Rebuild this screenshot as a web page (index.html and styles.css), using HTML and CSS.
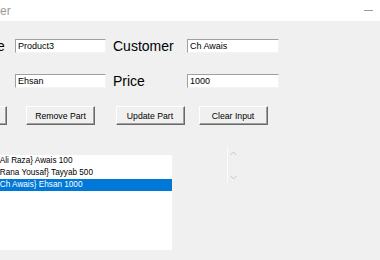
FILE: index.html
```html
<!DOCTYPE html>
<html>
<head>
<meta charset="utf-8">
<link rel="stylesheet" href="styles.css">
</head>
<body>
<div class="titlebar">
  <span class="title">Parts Manager</span>
  <span class="minimize"></span>
</div>
<main class="window">
  <div class="form">
    <label class="lbl">Part Name</label>
    <input class="entry" value="Product3">
    <label class="lbl lbl-right">Customer</label>
    <input class="entry" value="Ch Awais">

    <label class="lbl">Retailer</label>
    <input class="entry" value="Ehsan">
    <label class="lbl lbl-right">Price</label>
    <input class="entry" value="1000">

    <button class="btn btn-first">Add Part</button>
    <button class="btn">Remove Part</button>
    <button class="btn btn-mid">Update Part</button>
    <button class="btn">Clear Input</button>
  </div>
  <div class="lower">
    <ul class="listbox">
      <li>Product1 {Ali Raza} Awais 100</li>
      <li>Product2 {Rana Yousaf} Tayyab 500</li>
      <li class="selected">Product3 {Ch Awais} Ehsan 1000</li>
    </ul>
    <div class="scrollbar">
      <svg width="17" height="36" viewBox="0 0 17 36">
        <line x1="0.5" y1="0" x2="0.5" y2="36" stroke="#fbfbfb" stroke-width="1"/>
        <polyline points="3.5,8 6.5,5 9.5,8" fill="none" stroke="#c8c8c8" stroke-width="1"/>
        <polyline points="3.5,29 6.5,32 9.5,29" fill="none" stroke="#c8c8c8" stroke-width="1"/>
      </svg>
    </div>
  </div>
</main>
</body>
</html>
```

FILE: styles.css
```css
html, body {
  margin: 0;
  padding: 0;
}
body {
  width: 380px;
  height: 260px;
  overflow: hidden;
  background: #f0f0f0;
  font-family: "Liberation Sans", Arial, sans-serif;
}
.titlebar {
  height: 21px;
  background: #ffffff;
  display: flex;
  align-items: center;
  position: relative;
}
.title {
  font-size: 12px;
  color: #9a9a9a;
  margin-left: -68px;
  white-space: nowrap;
}
.minimize {
  position: absolute;
  left: 364px;
  top: 10px;
  width: 9px;
  height: 1px;
  background: #9a9a9a;
}
.window {
  padding-top: 7px;
}
.form {
  margin-left: -62px;
  display: grid;
  grid-template-columns: 77px 91px 7px 74px 92px;
  grid-template-rows: 35px 35px 35px;
  align-items: center;
}
.lbl {
  font-size: 14px;
  color: #000;
  white-space: nowrap;
}
.lbl-right {
  grid-column: 4;
}
.entry {
  box-sizing: border-box;
  width: 100%;
  height: 14px;
  margin: 0;
  padding: 0 2px;
  border: 1px solid;
  border-color: #a0a0a0 #f4f4f4 #f4f4f4 #a0a0a0;
  background: #fff;
  font-family: "Liberation Sans", Arial, sans-serif;
  font-size: 9px;
  color: #000;
  outline: none;
}
.btn {
  box-sizing: border-box;
  width: 69px;
  height: 19px;
  margin: 0;
  padding: 0;
  justify-self: center;
  background: #f0f0f0;
  border: 1px solid;
  border-color: #ffffff #696969 #696969 #ffffff;
  box-shadow: inset -1px -1px 0 #a0a0a0;
  font-family: "Liberation Sans", Arial, sans-serif;
  font-size: 8.7px;
  color: #000;
}
.btn-first {
  justify-self: start;
}
.btn-mid {
  grid-column: 4;
}
.lower {
  display: flex;
  align-items: flex-start;
  margin-left: -40px;
}
.listbox {
  list-style: none;
  margin: 22px 0 0 0;
  padding: 0;
  width: 212px;
  height: 95px;
  background: #fff;
  font-size: 8.2px;
  line-height: 12px;
  color: #000;
}
.listbox li {
  padding-left: 2px;
  white-space: nowrap;
}
.listbox .selected {
  background: #0078d7;
  color: #fff;
}
.scrollbar {
  margin: 14px 0 0 55px;
  width: 17px;
  height: 36px;
}
.scrollbar svg {
  display: block;
}
```
